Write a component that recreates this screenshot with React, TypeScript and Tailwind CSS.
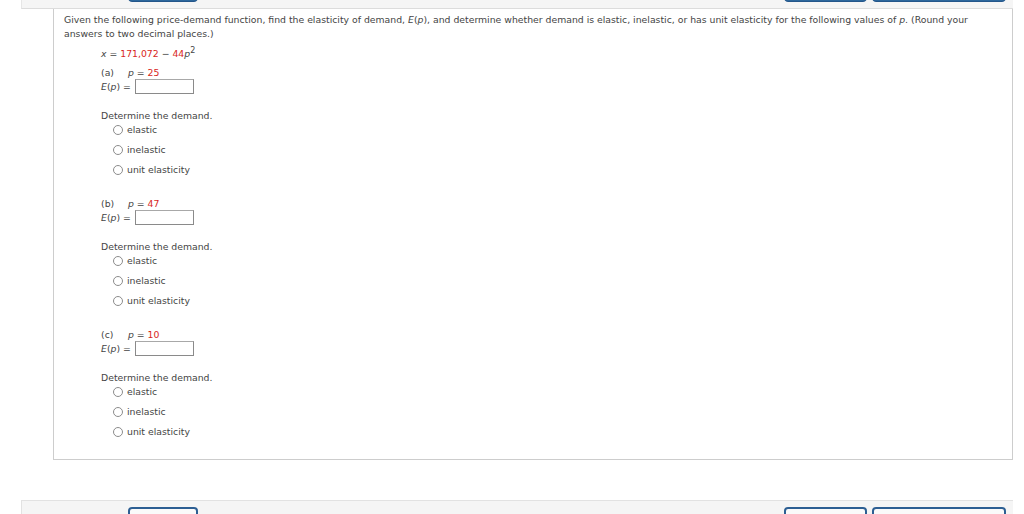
import React from "react";

const red = "text-[#d8261c]";

function FilledButton({ w }: { w: string }) {
  return (
    <div
      className={`${w} h-[20px] rounded-[4px] bg-[#2d679c] border border-[#24568a]`}
    />
  );
}

function OutlineButton({ w }: { w: string }) {
  return (
    <div
      className={`${w} h-[20px] rounded-[4px] bg-[#fafafa] border-2 border-[#2d5f93]`}
    />
  );
}

function Radio({ label }: { label: string }) {
  return (
    <div className="flex items-center h-[14px] pl-[12px]">
      <span className="w-[10px] h-[10px] rounded-full border border-[#8c8c8c] bg-white" />
      <span className="ml-[4px]">{label}</span>
    </div>
  );
}

function Part({ tag, value, first }: { tag: string; value: string; first?: boolean }) {
  return (
    <div className={first ? "mt-[5px]" : "mt-[20px]"}>
      <div className="flex items-center h-[13px]">
        <span className="w-[27px]">({tag})</span>
        <span>
          <i>p</i> = <span className={red}>{value}</span>
        </span>
      </div>
      <div className="flex items-center h-[15px]">
        <span>
          <i>E</i>(<i>p</i>) =
        </span>
        <span className="ml-[4px] w-[59px] h-[15px] border border-[#8a8a8a] border-t-[#a8a8a8] bg-white" />
      </div>
      <div className="mt-[15px] flex items-center h-[14px]">Determine the demand.</div>
      <div className="flex flex-col gap-[6px]">
        <Radio label="elastic" />
        <Radio label="inelastic" />
        <Radio label="unit elasticity" />
      </div>
    </div>
  );
}

export default function App() {
  return (
    <div className="w-[1024px] h-[514px] overflow-hidden bg-white text-[#444] text-[9.3px] leading-[14px] font-['DejaVu_Sans','Verdana',sans-serif]">
      {/* top toolbar, scrolled mostly out of view */}
      <div className="ml-[21px] w-[992px] h-[9px] overflow-hidden flex items-end pb-[6px] bg-[#f5f5f5] border-l border-[#e6e6e6] border-b border-b-[#dcdcdc]">
        <div className="ml-[106px]">
          <FilledButton w="w-[70px]" />
        </div>
        <div className="ml-auto mr-[7px] flex gap-[5px]">
          <FilledButton w="w-[83px]" />
          <FilledButton w="w-[134px]" />
        </div>
      </div>

      {/* question panel */}
      <div className="ml-[53px] w-[960px] border-l border-r border-b border-[#cdcdcd] pl-[10px] pt-[4px] pb-[20px]">
        <p className="whitespace-nowrap">
          Given the following price-demand function, find the elasticity of demand, <i>E</i>(<i>p</i>), and determine whether demand is elastic, inelastic, or has unit elasticity for the following values of <i>p</i>. (Round your
          <br />
          answers to two decimal places.)
        </p>
        <div className="pl-[37px]">
          <div className="mt-[6px] flex items-center h-[14px]">
            <span>
              <i>x</i> = <span className={red}>171,072</span> − <span className={red}>44</span>
              <i>p</i>
              <sup className="text-[8px] -top-[4px]">2</sup>
            </span>
          </div>
          <Part tag="a" value="25" first />
          <Part tag="b" value="47" />
          <Part tag="c" value="10" />
        </div>
      </div>

      {/* bottom toolbar */}
      <div className="mt-[40px] ml-[21px] w-[992px] h-[20px] overflow-hidden flex items-start pt-[6px] bg-[#f5f5f5] border-l border-t border-[#e2e2e2]">
        <div className="ml-[106px]">
          <OutlineButton w="w-[70px]" />
        </div>
        <div className="ml-auto mr-[7px] flex gap-[5px]">
          <OutlineButton w="w-[83px]" />
          <OutlineButton w="w-[134px]" />
        </div>
      </div>
    </div>
  );
}
